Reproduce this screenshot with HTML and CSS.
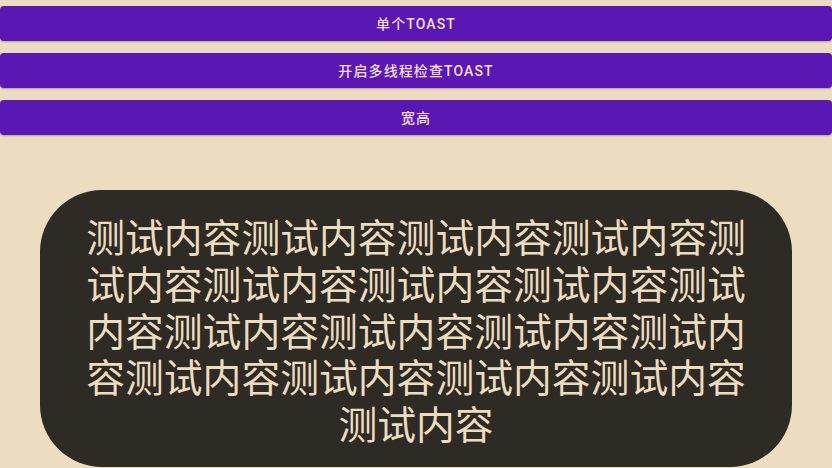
FILE: index.html
```html
<!DOCTYPE html>
<html lang="zh">
<head>
<meta charset="utf-8">
<link rel="stylesheet" href="styles.css">
</head>
<body>
<div class="page">
  <div class="buttons">
    <button class="btn">单个TOAST</button>
    <button class="btn">开启多线程检查TOAST</button>
    <button class="btn">宽高</button>
  </div>
  <div class="toast">测试内容测试内容测试内容测试内容测试内容测试内容测试内容测试内容测试内容测试内容测试内容测试内容测试内容测试内容测试内容测试内容测试内容测试内容</div>
</div>
</body>
</html>
```
FILE: styles.css
```css
html, body {
  margin: 0;
  padding: 0;
  background: #ecdcc0;
  width: 832px;
  height: 468px;
  overflow: hidden;
}
.page {
  display: flex;
  flex-direction: column;
  padding-top: 6px;
}
.buttons {
  display: flex;
  flex-direction: column;
  gap: 12px;
}
.btn {
  height: 35px;
  width: 100%;
  border: none;
  border-radius: 4px;
  background: #5a17b4;
  color: #f2dff0;
  font-family: Roboto, "Noto Sans CJK SC", sans-serif;
  font-weight: 500;
  font-size: 14px;
  letter-spacing: 1.1px;
  padding: 0 0 2px;
  margin: 0;
  box-shadow: 0 1px 2px rgba(0,0,0,0.25);
}
.toast {
  margin: 55px 40px 0;
  height: 277px;
  box-sizing: border-box;
  background: #2e2a24;
  border-radius: 62px;
  color: #ecdcc0;
  font-family: "Noto Sans CJK SC", sans-serif;
  font-size: 38.8px;
  line-height: 46.8px;
  text-align: center;
  padding: 22px 46px 0;
}
```
